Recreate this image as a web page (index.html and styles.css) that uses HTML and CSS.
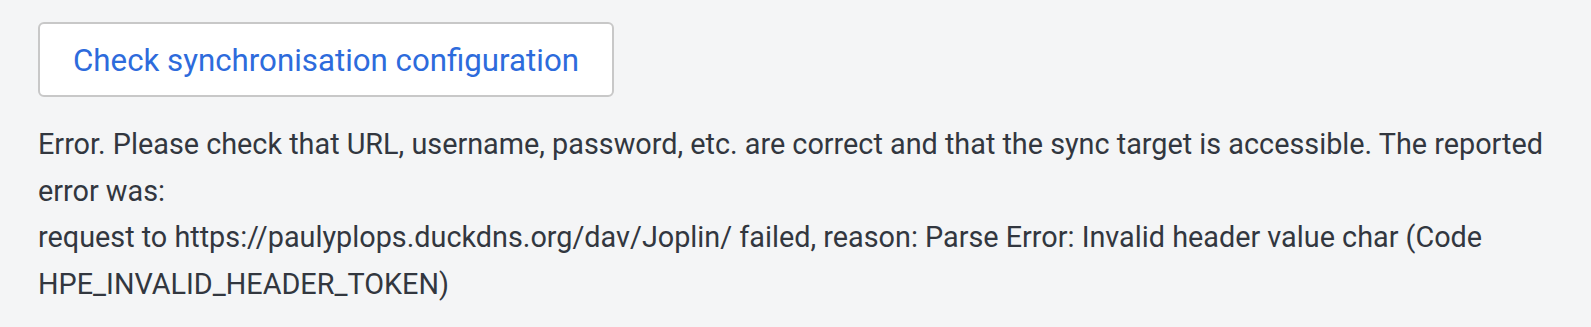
FILE: index.html
```html
<!DOCTYPE html>
<html>
<head>
<meta charset="utf-8">
<link rel="stylesheet" href="styles.css">
</head>
<body>
<div class="page">
  <button class="btn">Check synchronisation configuration</button>
  <div class="msg">
    <p class="line">Error. Please check that URL, username, password, etc. are correct and that the sync target is accessible. The reported error was:</p>
    <p class="line">request to https://paulyplops.duckdns.org/dav/Joplin/ failed, reason: Parse Error: Invalid header value char (Code HPE_INVALID_HEADER_TOKEN)</p>
  </div>
</div>
</body>
</html>
```
FILE: styles.css
```css
html, body {
  margin: 0;
  padding: 0;
  background: #f4f5f6;
}
.page {
  box-sizing: border-box;
  width: 1591px;
  height: 327px;
  padding: 22px 30px 0 38px;
  font-family: Roboto, "Liberation Sans", sans-serif;
  color: #32373f;
}
.btn {
  display: block;
  box-sizing: border-box;
  width: 576px;
  height: 75px;
  background: #ffffff;
  border: 2px solid #c8c8c8;
  border-radius: 6px;
  color: #2d6bdc;
  font-family: Roboto, "Liberation Sans", sans-serif;
  font-size: 31.25px;
  padding: 2px 0 0;
}
.msg {
  margin-top: 24px;
  font-size: 28.8px;
  line-height: 46.5px;
}
.line {
  margin: 0;
}
```
